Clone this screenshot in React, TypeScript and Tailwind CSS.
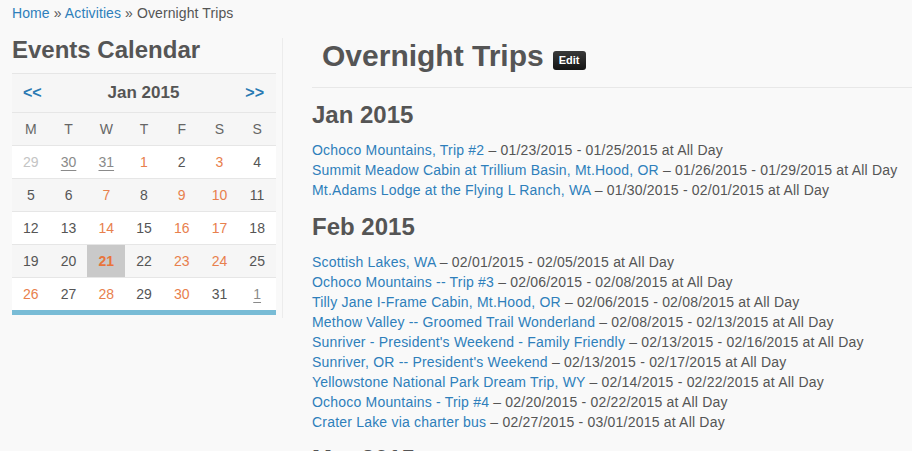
import React from 'react';

const ORANGE = 'text-[#e8804d]';

type Day = { n: number; kind?: 'faded' | 'other' | 'event' | 'today' };

const weeks: Day[][] = [
  [
    { n: 29, kind: 'faded' },
    { n: 30, kind: 'other' },
    { n: 31, kind: 'other' },
    { n: 1, kind: 'event' },
    { n: 2 },
    { n: 3, kind: 'event' },
    { n: 4 },
  ],
  [{ n: 5 }, { n: 6 }, { n: 7, kind: 'event' }, { n: 8 }, { n: 9, kind: 'event' }, { n: 10, kind: 'event' }, { n: 11 }],
  [{ n: 12 }, { n: 13 }, { n: 14, kind: 'event' }, { n: 15 }, { n: 16, kind: 'event' }, { n: 17, kind: 'event' }, { n: 18 }],
  [{ n: 19 }, { n: 20 }, { n: 21, kind: 'today' }, { n: 22 }, { n: 23, kind: 'event' }, { n: 24, kind: 'event' }, { n: 25 }],
  [
    { n: 26, kind: 'event' },
    { n: 27 },
    { n: 28, kind: 'event' },
    { n: 29 },
    { n: 30, kind: 'event' },
    { n: 31 },
    { n: 1, kind: 'other' },
  ],
];

const months = [
  {
    title: 'Jan 2015',
    trips: [
      ['Ochoco Mountains, Trip #2', '01/23/2015 - 01/25/2015'],
      ['Summit Meadow Cabin at Trillium Basin, Mt.Hood, OR', '01/26/2015 - 01/29/2015'],
      ['Mt.Adams Lodge at the Flying L Ranch, WA', '01/30/2015 - 02/01/2015'],
    ],
  },
  {
    title: 'Feb 2015',
    trips: [
      ['Scottish Lakes, WA', '02/01/2015 - 02/05/2015'],
      ['Ochoco Mountains -- Trip #3', '02/06/2015 - 02/08/2015'],
      ['Tilly Jane I-Frame Cabin, Mt.Hood, OR', '02/06/2015 - 02/08/2015'],
      ['Methow Valley -- Groomed Trail Wonderland', '02/08/2015 - 02/13/2015'],
      ["Sunriver - President's Weekend - Family Friendly", '02/13/2015 - 02/16/2015'],
      ["Sunriver, OR -- President's Weekend", '02/13/2015 - 02/17/2015'],
      ['Yellowstone National Park Dream Trip, WY', '02/14/2015 - 02/22/2015'],
      ['Ochoco Mountains - Trip #4', '02/20/2015 - 02/22/2015'],
      ['Crater Lake via charter bus', '02/27/2015 - 03/01/2015'],
    ],
  },
  {
    title: 'Mar 2015',
    trips: [['Ochoco Mountains - Trip #5', '03/06/2015 - 03/08/2015']],
  },
];

const DayCell = ({ day }: { day: Day }) => {
  if (day.kind === 'today') {
    return (
      <div className="flex items-center justify-center bg-[#c9c9c9] font-bold text-[#e8743b]">
        {day.n}
      </div>
    );
  }
  const tone =
    day.kind === 'faded'
      ? 'text-[#c4c4c4]'
      : day.kind === 'other'
        ? 'text-[#8a8a8a] underline underline-offset-[3px]'
        : day.kind === 'event'
          ? ORANGE
          : 'text-[#555]';
  return <div className={`flex items-center justify-center ${tone}`}>{day.n}</div>;
};

const Calendar = () => (
  <div className="w-[264px] text-[14px]">
    {/* month nav */}
    <div className="h-[39px] border-t border-[#e6e6e6] bg-[#f6f6f6] flex items-center justify-between pl-[11px] pr-[12px]">
      <span className="font-bold text-[16px] text-[#2a7ab3]">&lt;&lt;</span>
      <span className="font-bold text-[17px] text-[#555]">Jan 2015</span>
      <span className="font-bold text-[16px] text-[#2a7ab3]">&gt;&gt;</span>
    </div>

    {/* weekdays */}
    <div className="h-[33px] border-t border-[#e6e6e6] bg-[#f6f6f6] grid grid-cols-7 text-[#666]">
      {['M', 'T', 'W', 'T', 'F', 'S', 'S'].map((d, i) => (
        <div key={i} className="flex items-center justify-center">
          {d}
        </div>
      ))}
    </div>

    {weeks.map((week, i) => (
      <div
        key={i}
        className={`h-[33px] border-t border-[#e6e6e6] grid grid-cols-7 ${
          i % 2 === 0 ? 'bg-white' : 'bg-[#f6f6f6]'
        }`}
      >
        {week.map((day, j) => (
          <DayCell key={j} day={day} />
        ))}
      </div>
    ))}

    <div className="h-[5px] bg-[#79bcd6]" />
  </div>
);

export default function App() {
  return (
    <div
      className="h-[451px] bg-[#f9f9f9] text-[#555] overflow-hidden"
      style={{ fontFamily: '"Liberation Sans", Arial, sans-serif' }}
    >
      {/* breadcrumb */}
      <div className="pl-[12px] pt-[3px] h-[38px] text-[14px] leading-[20px] tracking-[0.1px]">
        <span className="text-[#2e7fbb]">Home</span> »{' '}
        <span className="text-[#2e7fbb]">Activities</span> » Overnight Trips
      </div>

      <div className="flex items-start">
        {/* sidebar */}
        <aside className="ml-[12px] w-[271px] pr-[6px] pb-[3px] border-r border-[#ececec]">
          <h2 className="-mt-[2px] h-[28px] leading-[28px] text-[24px] font-bold text-[#555]">
            Events Calendar
          </h2>
          <div className="mt-[9px]">
            <Calendar />
          </div>
        </aside>

        {/* main */}
        <main className="flex-1 min-w-0 pl-[29px]">
          <div className="flex items-start pl-[10px]">
            <h1 className="h-[36px] leading-[36px] text-[30px] font-bold text-[#555]">
              Overnight Trips
            </h1>
            <span className="ml-[9px] mt-[13px] h-[19px] px-[6px] rounded-[3px] bg-gradient-to-b from-[#3a3a3a] to-[#151515] text-white text-[11px] font-bold leading-[19px]">
              Edit
            </span>
          </div>
          <div className="mt-[13px] border-t border-[#e8e8e8]" />

          {months.map((m) => (
            <section key={m.title}>
              <h3 className="mt-[13px] mb-[11px] h-[28px] leading-[28px] text-[24px] font-bold text-[#555]">
                {m.title}
              </h3>
              <ul className="text-[14px] leading-[20px] tracking-[0.2px]">
                {m.trips.map(([name, dates], i) => (
                  <li key={i} className="whitespace-nowrap">
                    <span className="text-[#2e7fbb]">{name}</span> – {dates} at All Day
                  </li>
                ))}
              </ul>
            </section>
          ))}
        </main>
      </div>
    </div>
  );
}
